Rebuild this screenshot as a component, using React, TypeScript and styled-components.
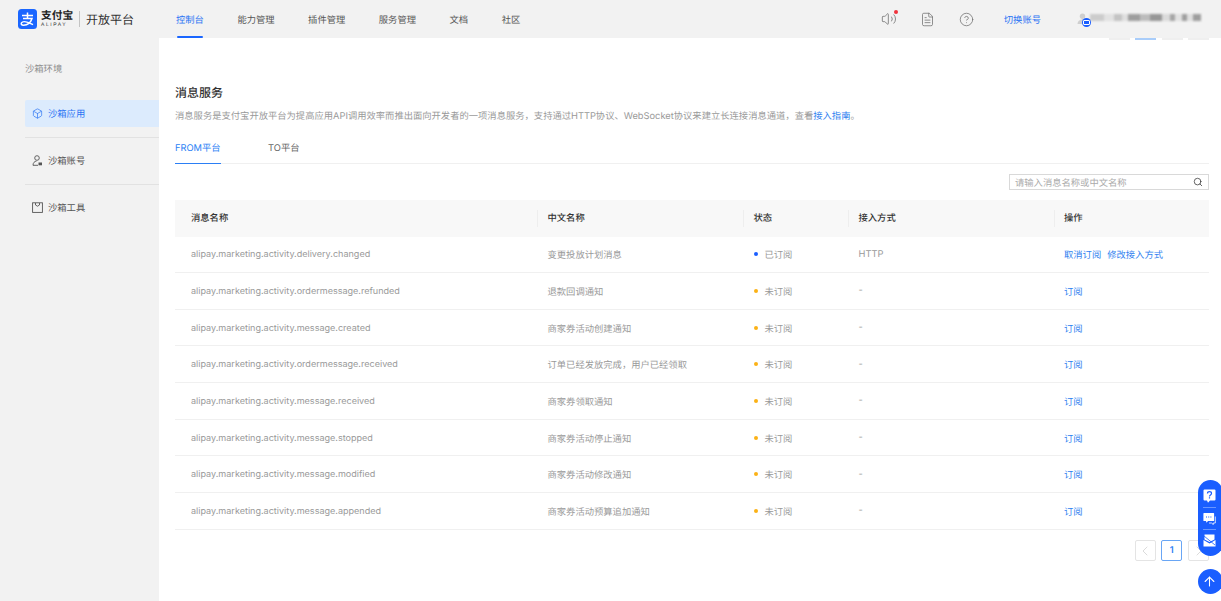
import React from 'react';
import styled, { createGlobalStyle } from 'styled-components';
import { Box, ChevronLeft, ChevronRight, CircleHelp, FileText, Search, Volume2, ArrowUp } from 'lucide-react';

const GlobalStyle = createGlobalStyle`
  html, body {
    margin: 0;
    padding: 0;
    width: 1221px;
    height: 601px;
    overflow: hidden;
    background: #fff;
  }
  body {
    font-family: Inter, "Noto Sans CJK SC", "Liberation Sans", sans-serif;
    font-size: 9.3px;
    color: #999;
    text-rendering: geometricPrecision;
  }
  * { box-sizing: border-box; }
`;

const Page = styled.div`
  position: relative;
  width: 1221px;
  height: 601px;
  overflow: hidden;
  display: flex;
  flex-direction: column;
`;

const Header = styled.header`
  height: 38px;
  flex: none;
  display: flex;
  align-items: center;
  padding: 0 21px 0 18px;
  background: #f2f2f2;
`;

const Logo = styled.div`
  display: flex;
  align-items: center;
  width: 158px;
  flex: none;
`;

const LogoWords = styled.div`
  display: flex;
  flex-direction: column;
  align-items: flex-start;
  margin-left: 4px;
  color: #222;
`;

const LogoCn = styled.span`
  font-size: 10.7px;
  line-height: 12px;
  font-weight: 700;
`;

const LogoEn = styled.span`
  font-family: "Liberation Sans", sans-serif;
  font-size: 5px;
  line-height: 6px;
  letter-spacing: 1.55px;
  color: #333;
`;

const LogoBar = styled.span`
  width: 1px;
  height: 16px;
  margin: 0 6px;
  background: #c4c4c4;
`;

const LogoTitle = styled.span`
  font-size: 12px;
  color: #333;
`;

const Nav = styled.nav`
  display: flex;
  height: 38px;
  gap: 33.5px;
`;

const NavItem = styled.a<{ $active?: boolean }>`
  position: relative;
  display: flex;
  align-items: center;
  height: 38px;
  padding-bottom: 1px;
  color: ${({ $active }) => ($active ? '#2b74f4' : '#555')};
  &::after {
    content: '';
    display: ${({ $active }) => ($active ? 'block' : 'none')};
    position: absolute;
    left: 1px;
    right: 1px;
    bottom: 0;
    height: 2.5px;
    border-radius: 2px;
    background: #1a66ff;
  }
`;

const HeaderRight = styled.div`
  margin-left: auto;
  display: flex;
  align-items: center;
`;

const HeaderIcon = styled.span<{ $gap: number }>`
  position: relative;
  display: flex;
  margin-left: ${({ $gap }) => $gap}px;
  color: #6e6e6e;
`;

const RedDot = styled.span`
  position: absolute;
  top: -1px;
  right: -1px;
  width: 4px;
  height: 4px;
  border-radius: 50%;
  background: #f0323c;
`;

const SwitchAccount = styled.a`
  margin-left: 30px;
  color: #2b74f4;
`;

const User = styled.div`
  position: relative;
  display: flex;
  align-items: flex-start;
  width: 123px;
  height: 18px;
  margin-left: 36px;
`;

const UserBadge = styled.span`
  position: absolute;
  left: 4.5px;
  top: 8px;
  width: 9px;
  height: 9px;
  border-radius: 50%;
  background: #1a5eff;
  display: flex;
  align-items: center;
  justify-content: center;
  &::after {
    content: '';
    width: 5px;
    height: 3px;
    border: 1px solid #fff;
    border-radius: 1px;
  }
`;

const BlurredName = styled.div`
  display: flex;
  align-items: center;
  margin: 3px 0 0 13px;
  height: 9px;
  filter: blur(1.3px);
`;

const NamePiece = styled.span<{ $w: number; $tone: number }>`
  width: ${({ $w }) => $w}px;
  height: 7px;
  background: ${({ $tone }) => `rgba(90, 90, 90, ${$tone})`};
`;

const Body = styled.div`
  flex: 1;
  display: flex;
  min-height: 0;
`;

const Sidebar = styled.aside`
  width: 159px;
  flex: none;
  padding: 25px 0 0 25px;
  background: #f2f2f2;
`;

const SideTitle = styled.div`
  height: 14px;
  line-height: 14px;
  color: #8f8f8f;
`;

const SideList = styled.div`
  margin-top: 23px;
  display: flex;
  flex-direction: column;
`;

const SideItem = styled.a<{ $active?: boolean }>`
  height: 26.5px;
  display: flex;
  align-items: center;
  gap: 5px;
  padding-left: 7px;
  border-radius: 2px 0 0 2px;
  color: ${({ $active }) => ($active ? '#2b74f4' : '#555')};
  background: ${({ $active }) => ($active ? '#dcebfd' : 'transparent')};
`;

const SideLine = styled.div`
  height: 1px;
  margin: 10px 0 9.5px;
  background: #e2e2e2;
`;

const Main = styled.main`
  flex: 1;
  min-width: 0;
  padding: 0 12px 0 16px;
  background: #fff;
`;

const ClippedPager = styled.div`
  display: flex;
  justify-content: flex-end;
  gap: 5.5px;
  height: 2px;
`;

const ClippedCell = styled.span<{ $active?: boolean }>`
  width: 21px;
  height: 2px;
  background: ${({ $active }) => ($active ? '#a9cdfa' : '#efefef')};
`;

const Title = styled.h1`
  margin: 44px 0 0;
  font-size: 12px;
  line-height: 18px;
  font-weight: 500;
  color: #333;
`;

const Description = styled.p`
  margin: 7px 0 0;
  line-height: 16px;
  color: #999;
  white-space: nowrap;
`;

const Link = styled.a`
  color: #2f7ff0;
`;

const Tabs = styled.div`
  margin-top: 14px;
  height: 25px;
  display: flex;
  gap: 47.5px;
  border-bottom: 1px solid #f0f0f0;
`;

const Tab = styled.a<{ $active?: boolean }>`
  height: 25px;
  padding-top: 2px;
  line-height: 16px;
  color: ${({ $active }) => ($active ? '#2b7ff5' : '#666')};
  border-bottom: 1px solid ${({ $active }) => ($active ? '#2b7ff5' : 'transparent')};
`;

const SearchRow = styled.div`
  margin-top: 10px;
  display: flex;
  justify-content: flex-end;
`;

const SearchBox = styled.div`
  width: 200px;
  height: 16px;
  display: flex;
  align-items: center;
  justify-content: space-between;
  padding: 0 5px;
  border: 1px solid #d9d9d9;
  color: #aaa;
  svg {
    color: #333;
  }
`;

const Table = styled.div`
  margin-top: 10px;
`;

const Row = styled.div<{ $head?: boolean }>`
  display: grid;
  grid-template-columns: 362px 206px 105px 205.5px 155.5px;
  align-items: center;
  height: ${({ $head }) => ($head ? '36.5px' : '36.65px')};
  background: ${({ $head }) => ($head ? '#f8f8f8' : '#fff')};
  border-bottom: ${({ $head }) => ($head ? 'none' : '1px solid #f0f0f0')};
`;

const HeadCell = styled.div<{ $first?: boolean }>`
  position: relative;
  padding-left: ${({ $first }) => ($first ? '16px' : '10.5px')};
  line-height: 17px;
  font-weight: 500;
  color: #333;
  &::before {
    content: '';
    display: ${({ $first }) => ($first ? 'none' : 'block')};
    position: absolute;
    left: 0;
    top: 0;
    bottom: 0;
    width: 1px;
    background: #eee;
  }
`;

const Cell = styled.div<{ $first?: boolean }>`
  display: flex;
  align-items: center;
  gap: 6px;
  height: 16px;
  margin-top: ${({ $first }) => ($first ? '1px' : '0')};
  padding-left: ${({ $first }) => ($first ? '16px' : '10.5px')};
  font-size: ${({ $first }) => ($first ? '9.05px' : '9.3px')};
  color: #999;
  white-space: nowrap;
`;

const StatusDot = styled.span<{ $on?: boolean }>`
  width: 4px;
  height: 4px;
  margin-right: 1px;
  border-radius: 50%;
  background: ${({ $on }) => ($on ? '#1a5eff' : '#fbb116')};
`;

const Pager = styled.div`
  margin-top: 10.5px;
  display: flex;
  justify-content: flex-end;
  gap: 5.7px;
`;

const PageButton = styled.span<{ $active?: boolean }>`
  width: 21px;
  height: 21px;
  display: flex;
  align-items: center;
  justify-content: center;
  border: 1px solid ${({ $active }) => ($active ? '#69a6f5' : '#e4e4e4')};
  border-radius: 2px;
  font-weight: 600;
  color: ${({ $active }) => ($active ? '#2b7ff5' : '#c8c8c8')};
`;

const HelpDock = styled.div`
  position: absolute;
  right: -2px;
  top: 479.5px;
  width: 25.5px;
  height: 76px;
  padding: 5px 2.5px 0 0;
  display: flex;
  flex-direction: column;
  align-items: center;
  border-radius: 13px;
  background: #1a5eff;
  color: #fff;
`;

const DockSlot = styled.div`
  width: 13px;
  height: 22px;
  flex: none;
  display: flex;
  align-items: center;
  justify-content: center;
  & + & {
    border-top: 1px solid rgba(255, 255, 255, 0.35);
  }
`;

const BackTop = styled.div`
  position: absolute;
  right: -2px;
  top: 569px;
  width: 25px;
  height: 25px;
  padding-right: 2px;
  border-radius: 50%;
  display: flex;
  align-items: center;
  justify-content: center;
  background: #1a5eff;
  color: #fff;
`;

const messages = [
  ['alipay.marketing.activity.delivery.changed', '变更投放计划消息'],
  ['alipay.marketing.activity.ordermessage.refunded', '退款回调通知'],
  ['alipay.marketing.activity.message.created', '商家券活动创建通知'],
  ['alipay.marketing.activity.ordermessage.received', '订单已经发放完成，用户已经领取'],
  ['alipay.marketing.activity.message.received', '商家券领取通知'],
  ['alipay.marketing.activity.message.stopped', '商家券活动停止通知'],
  ['alipay.marketing.activity.message.modified', '商家券活动修改通知'],
  ['alipay.marketing.activity.message.appended', '商家券活动预算追加通知'],
];

const nameBits: [number, number][] = [
  [14, 0.25], [10, 0.1], [8, 0.3], [6, 0.12], [12, 0.55], [10, 0.35], [12, 0.6], [8, 0.15], [5, 0.5], [7, 0.1], [5, 0.55], [6, 0.12], [8, 0.55],
];

const AlipayMark = () => (
  <svg width="19" height="20" viewBox="0 0 19 20">
    <rect width="19" height="20" rx="3.5" fill="#1a66ff" />
    <path d="M4 6.5h11M9.5 3.5v5.5M5 9.5h9c-1.2 3.8-4.6 6.6-8.5 6.8-2 0-2.7-1.3-2-2.5 1-1.7 5-1.5 11.5 1.8" fill="none" stroke="#fff" strokeWidth="1.5" />
  </svg>
);

const SubUserIcon = () => (
  <svg width="11" height="11" viewBox="0 0 11 11" fill="none" stroke="currentColor" strokeWidth="0.9">
    <circle cx="5" cy="3" r="2.3" />
    <path d="M1 10.3c0-2.5 1.5-4 3.5-4.2M1 10.3h5" />
    <rect x="6.5" y="7.5" width="3.5" height="2.8" fill="currentColor" stroke="none" />
  </svg>
);

const ToolboxIcon = () => (
  <svg width="11" height="11" viewBox="0 0 11 11" fill="none" stroke="currentColor" strokeWidth="0.9">
    <rect x="0.6" y="0.8" width="9.8" height="9.6" />
    <path d="M3.5 1v2l2 1.2 2-1.2V1" />
  </svg>
);

const PersonIcon = () => (
  <svg width="11" height="11" viewBox="0 0 11 11" fill="#cfcfcf" style={{ position: 'absolute', left: 0, top: 3 }}>
    <circle cx="5.5" cy="3.2" r="2.7" />
    <path d="M0.5 11c0-3 2.2-4.5 5-4.5s5 1.5 5 4.5z" />
  </svg>
);

const QuestionIcon = () => (
  <svg width="13" height="14" viewBox="0 0 13 14">
    <path d="M1.5 0.5h10a1 1 0 0 1 1 1v9a1 1 0 0 1-1 1H7l-2 2.2-1-2.2H1.5a1 1 0 0 1-1-1v-9a1 1 0 0 1 1-1z" fill="#fff" />
    <path d="M4.5 4.5c0-2.4 4-2.4 4 0 0 1.5-2 1.5-2 3M6.5 8.3v1.2" fill="none" stroke="#1a5eff" strokeWidth="1.2" />
  </svg>
);

const ChatIcon = () => (
  <svg width="13" height="13" viewBox="0 0 13 13">
    <path d="M1 1h9.5a.6.6 0 0 1 .6.6v6.8a.6.6 0 0 1-.6.6H5L3.5 10.8 3 9H1a.6.6 0 0 1-.6-.6V1.6A.6.6 0 0 1 1 1z" fill="#fff" />
    <path d="M3 5h1M5.2 5h1M7.4 5h1" stroke="#1a5eff" strokeWidth="1.1" />
    <path d="M12.3 4.5v6.5h-2v1.600L8.500 11H6" fill="none" stroke="#fff" strokeWidth="0.8" />
  </svg>
);

const MailIcon = () => (
  <svg width="13" height="13" viewBox="0 0 13 13">
    <path d="M1.5 0.5h10v5L6.5 8l-5-2.5z" fill="#fff" />
    <path d="M0.5 6l6 3.5 6-3.5v6.5h-12z" fill="#fff" />
    <path d="M1 2l11 9" stroke="#1a5eff" strokeWidth="0.8" />
  </svg>
);

const App = () => {
  return (
    <Page>
      <GlobalStyle />
      <Header>
        <Logo>
          <AlipayMark />
          <LogoWords>
            <LogoCn>支付宝</LogoCn>
            <LogoEn>ALIPAY</LogoEn>
          </LogoWords>
          <LogoBar />
          <LogoTitle>开放平台</LogoTitle>
        </Logo>
        <Nav>
          <NavItem $active>控制台</NavItem>
          <NavItem>能力管理</NavItem>
          <NavItem>插件管理</NavItem>
          <NavItem>服务管理</NavItem>
          <NavItem>文档</NavItem>
          <NavItem>社区</NavItem>
        </Nav>
        <HeaderRight>
          <HeaderIcon $gap={0}>
            <Volume2 size={16} strokeWidth={1.2} />
            <RedDot />
          </HeaderIcon>
          <HeaderIcon $gap={23}>
            <FileText size={15} strokeWidth={1.2} />
          </HeaderIcon>
          <HeaderIcon $gap={24}>
            <CircleHelp size={15} strokeWidth={1.2} />
          </HeaderIcon>
          <SwitchAccount>切换账号</SwitchAccount>
          <User>
            <PersonIcon />
            <UserBadge />
            <BlurredName>
              {nameBits.map(([w, tone], i) => (
                <NamePiece key={i} $w={w} $tone={tone} />
              ))}
            </BlurredName>
          </User>
        </HeaderRight>
      </Header>
      <Body>
        <Sidebar>
          <SideTitle>沙箱环境</SideTitle>
          <SideList>
            <SideItem $active>
              <Box size={11} strokeWidth={1.5} />
              沙箱应用
            </SideItem>
            <SideLine />
            <SideItem>
              <SubUserIcon />
              沙箱账号
            </SideItem>
            <SideLine />
            <SideItem>
              <ToolboxIcon />
              沙箱工具
            </SideItem>
          </SideList>
        </Sidebar>
        <Main>
          <ClippedPager>
            <ClippedCell />
            <ClippedCell $active />
            <ClippedCell />
            <ClippedCell />
          </ClippedPager>
          <Title>消息服务</Title>
          <Description>
            消息服务是支付宝开放平台为提高应用API调用效率而推出面向开发者的一项消息服务，支持通过HTTP协议、WebSocket协议来建立长连接消息通道，查看
            <Link>接入指南</Link>。
          </Description>
          <Tabs>
            <Tab $active>FROM平台</Tab>
            <Tab>TO平台</Tab>
          </Tabs>
          <SearchRow>
            <SearchBox>
              请输入消息名称或中文名称
              <Search size={10} strokeWidth={1.8} />
            </SearchBox>
          </SearchRow>
          <Table>
            <Row $head>
              <HeadCell $first>消息名称</HeadCell>
              <HeadCell>中文名称</HeadCell>
              <HeadCell>状态</HeadCell>
              <HeadCell>接入方式</HeadCell>
              <HeadCell>操作</HeadCell>
            </Row>
            {messages.map(([name, cn], i) => (
              <Row key={name}>
                <Cell $first>{name}</Cell>
                <Cell>{cn}</Cell>
                <Cell>
                  <StatusDot $on={i === 0} />
                  {i === 0 ? '已订阅' : '未订阅'}
                </Cell>
                <Cell>{i === 0 ? 'HTTP' : '-'}</Cell>
                <Cell>
                  {i === 0 ? (
                    <>
                      <Link>取消订阅</Link>
                      <Link>修改接入方式</Link>
                    </>
                  ) : (
                    <Link>订阅</Link>
                  )}
                </Cell>
              </Row>
            ))}
          </Table>
          <Pager>
            <PageButton>
              <ChevronLeft size={16} strokeWidth={1} />
            </PageButton>
            <PageButton $active>1</PageButton>
            <PageButton>
              <ChevronRight size={16} strokeWidth={1} />
            </PageButton>
          </Pager>
        </Main>
      </Body>
      <HelpDock>
        <DockSlot>
          <QuestionIcon />
        </DockSlot>
        <DockSlot>
          <ChatIcon />
        </DockSlot>
        <DockSlot>
          <MailIcon />
        </DockSlot>
      </HelpDock>
      <BackTop>
        <ArrowUp size={15} strokeWidth={1.7} />
      </BackTop>
    </Page>
  );
};

export default App;
